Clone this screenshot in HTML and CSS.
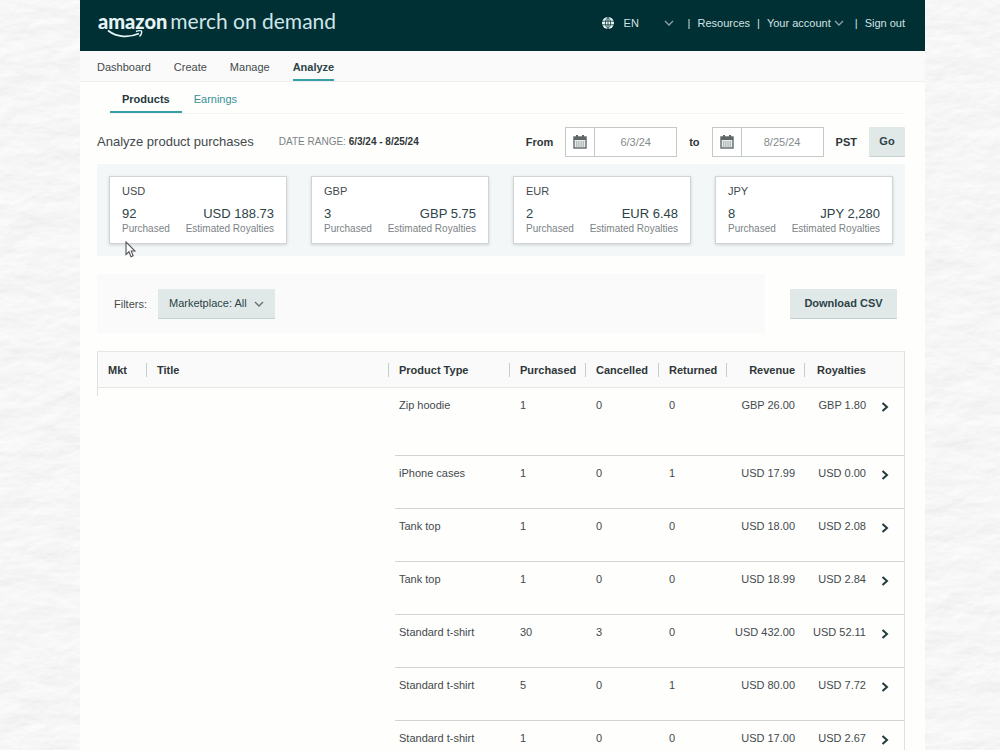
FILE: index.html
```
<!DOCTYPE html>
<html lang="en">
<head>
  <meta charset="UTF-8">
  <title>Merch on Demand - Analyze</title>
  <link rel="stylesheet" href="styles.css">
</head>
<body>
  <!-- Paper backdrop -->
  <svg class="paper" width="100%" height="100%" aria-hidden="true">
    <filter id="paper" x="0" y="0" width="100%" height="100%" color-interpolation-filters="sRGB">
      <feTurbulence type="fractalNoise" baseFrequency="0.025 0.045" numOctaves="4" seed="8" result="noise"/>
      <feDiffuseLighting in="noise" lighting-color="#fff" surfaceScale="0.6" diffuseConstant="1.02">
        <feDistantLight azimuth="250" elevation="71"/>
      </feDiffuseLighting>
    </filter>
    <rect width="100%" height="100%" filter="url(#paper)"/>
  </svg>

  <div class="page">
    <header class="topbar">
      <a class="logo" href="#">
        <span class="logo-amazon">amazon
          <svg class="smile" viewBox="0 0 36 9" fill="none" stroke="#e6f4f6" aria-hidden="true">
            <path d="M1 1.500C10 8.500 22 9 32 4.500" stroke-width="1.800"/>
            <path d="M29 2.500C31 1.500 34 1.300 34.500 2C35 3.500 34 6 32.500 7.500" stroke-width="1.400"/>
          </svg>
        </span>
        <span class="logo-merch">merch on demand</span>
      </a>
      <div class="account">
        <svg class="globe" viewBox="0 0 12 12" aria-hidden="true">
          <circle cx="6" cy="6" r="6" fill="#eef8f8"/>
          <path d="M0 4.200H12M0 7.800H12M6 0V12M6 0.500C2.500 3 2.500 9 6 11.500M6 0.500C9.500 3 9.500 9 6 11.500" fill="none" stroke="#002f34" stroke-width="0.800"/>
        </svg>
        <select class="lang" aria-label="Language"><option>EN</option></select>
        <svg class="chev" viewBox="0 0 10 6" aria-hidden="true"><path d="M1 1L5 5L9 1"/></svg>
        <span class="bar">|</span>
        <a href="#">Resources</a>
        <span class="bar">|</span>
        <a href="#">Your account <svg class="chev" viewBox="0 0 10 6" aria-hidden="true"><path d="M1 1L5 5L9 1"/></svg></a>
        <span class="bar last">|</span>
        <a href="#">Sign out</a>
      </div>
    </header>

    <nav class="main-nav">
      <a href="#">Dashboard</a>
      <a href="#">Create</a>
      <a href="#">Manage</a>
      <a href="#" class="active">Analyze</a>
    </nav>

    <main>
      <nav class="sub-nav">
        <a href="#" class="active">Products</a>
        <a href="#">Earnings</a>
      </nav>

      <div class="heading">
        <h1>Analyze product purchases</h1>
        <p class="range">DATE RANGE: <strong>6/3/24 - 8/25/24</strong></p>
        <form class="dates">
          <label for="from">From</label>
          <div class="date">
            <svg viewBox="0 0 14 14" aria-hidden="true">
              <path d="M1 2H13V13H1Z" fill="#e9ecec" stroke="#6b7274" stroke-width="1.500"/>
              <path d="M1 2H13V5H1ZM3 0H5V3H3ZM9 0H11V3H9Z" fill="#5f6668"/>
              <path d="M3 7H11M3 9H11M3 11H11" stroke="#7c8385" stroke-dasharray="1.300 0.900"/>
            </svg>
            <input type="text" id="from" value="6/3/24">
          </div>
          <label for="to">to</label>
          <div class="date">
            <svg viewBox="0 0 14 14" aria-hidden="true">
              <path d="M1 2H13V13H1Z" fill="#e9ecec" stroke="#6b7274" stroke-width="1.500"/>
              <path d="M1 2H13V5H1ZM3 0H5V3H3ZM9 0H11V3H9Z" fill="#5f6668"/>
              <path d="M3 7H11M3 9H11M3 11H11" stroke="#7c8385" stroke-dasharray="1.300 0.900"/>
            </svg>
            <input type="text" id="to" value="8/25/24">
          </div>
          <span class="zone">PST</span>
          <button type="button" class="btn go">Go</button>
        </form>
      </div>

      <section class="cards">
        <div class="card">
          <h2>USD</h2>
          <div class="figures">
            <p><b>92</b>Purchased</p>
            <p class="right"><b>USD 188.73</b>Estimated Royalties</p>
          </div>
        </div>
        <div class="card">
          <h2>GBP</h2>
          <div class="figures">
            <p><b>3</b>Purchased</p>
            <p class="right"><b>GBP 5.75</b>Estimated Royalties</p>
          </div>
        </div>
        <div class="card">
          <h2>EUR</h2>
          <div class="figures">
            <p><b>2</b>Purchased</p>
            <p class="right"><b>EUR 6.48</b>Estimated Royalties</p>
          </div>
        </div>
        <div class="card">
          <h2>JPY</h2>
          <div class="figures">
            <p><b>8</b>Purchased</p>
            <p class="right"><b>JPY 2,280</b>Estimated Royalties</p>
          </div>
        </div>
        <svg class="cursor" viewBox="0 0 11 17" aria-hidden="true">
          <path d="M1 1V13.500L4 10.800L6 15.800L8.200 14.800L6.200 10H10Z" fill="#fff" stroke="#555" stroke-width="1.100"/>
        </svg>
      </section>

      <div class="tools">
        <div class="filters">
          <label for="market">Filters:</label>
          <div class="market">
            <select id="market" class="btn"><option>Marketplace: All</option></select>
            <svg class="chev" viewBox="0 0 10 6" aria-hidden="true"><path d="M1 1L5 5L9 1"/></svg>
          </div>
        </div>
        <button type="button" class="btn download">Download CSV</button>
      </div>

      <table>
        <colgroup>
          <col class="c-mkt"><col class="c-title"><col class="c-type"><col class="c-purchased"><col class="c-cancelled"><col class="c-returned"><col class="c-revenue"><col class="c-royalties"><col class="c-more">
        </colgroup>
        <thead>
          <tr>
            <th>Mkt</th>
            <th class="title">Title</th>
            <th class="type">Product Type</th>
            <th>Purchased</th>
            <th>Cancelled</th>
            <th>Returned</th>
            <th class="num">Revenue</th>
            <th class="num">Royalties</th>
            <th></th>
          </tr>
        </thead>
        <tbody>
          <tr>
            <td colspan="2"></td><td class="type">Zip hoodie</td><td>1</td><td>0</td><td>0</td><td class="num">GBP 26.00</td><td class="num">GBP 1.80</td>
            <td class="more"><svg viewBox="0 0 8 10"><path d="M1.500 1L6 5L1.500 9"/></svg></td>
          </tr>
          <tr>
            <td colspan="2"></td><td class="type">iPhone cases</td><td>1</td><td>0</td><td>1</td><td class="num">USD 17.99</td><td class="num">USD 0.00</td>
            <td class="more"><svg viewBox="0 0 8 10"><path d="M1.500 1L6 5L1.500 9"/></svg></td>
          </tr>
          <tr>
            <td colspan="2"></td><td class="type">Tank top</td><td>1</td><td>0</td><td>0</td><td class="num">USD 18.00</td><td class="num">USD 2.08</td>
            <td class="more"><svg viewBox="0 0 8 10"><path d="M1.500 1L6 5L1.500 9"/></svg></td>
          </tr>
          <tr>
            <td colspan="2"></td><td class="type">Tank top</td><td>1</td><td>0</td><td>0</td><td class="num">USD 18.99</td><td class="num">USD 2.84</td>
            <td class="more"><svg viewBox="0 0 8 10"><path d="M1.500 1L6 5L1.500 9"/></svg></td>
          </tr>
          <tr>
            <td colspan="2"></td><td class="type">Standard t-shirt</td><td>30</td><td>3</td><td>0</td><td class="num">USD 432.00</td><td class="num">USD 52.11</td>
            <td class="more"><svg viewBox="0 0 8 10"><path d="M1.500 1L6 5L1.500 9"/></svg></td>
          </tr>
          <tr>
            <td colspan="2"></td><td class="type">Standard t-shirt</td><td>5</td><td>0</td><td>1</td><td class="num">USD 80.00</td><td class="num">USD 7.72</td>
            <td class="more"><svg viewBox="0 0 8 10"><path d="M1.500 1L6 5L1.500 9"/></svg></td>
          </tr>
          <tr>
            <td colspan="2"></td><td class="type">Standard t-shirt</td><td>1</td><td>0</td><td>0</td><td class="num">USD 17.00</td><td class="num">USD 2.67</td>
            <td class="more"><svg viewBox="0 0 8 10"><path d="M1.500 1L6 5L1.500 9"/></svg></td>
          </tr>
        </tbody>
      </table>
    </main>
  </div>
</body>
</html>
```
FILE: styles.css
```
* {
  box-sizing: border-box;
}
body {
  margin: 0;
  background: #f5f5f5;
  color: #434a4c;
  font-family: "Liberation Sans", Arial, sans-serif;
  font-size: 11px;
  line-height: 16px;
}
h1, h2, p {
  margin: 0;
  font-weight: normal;
}
a {
  color: inherit;
  text-decoration: none;
}
input, select, button {
  font: inherit;
  color: inherit;
}
select {
  appearance: none;
}
.paper {
  position: fixed;
  top: 0;
  left: 0;
  z-index: -1;
}
.page {
  margin: 0 75px 0 80px;
  min-height: 100vh;
  background: #fefefd;
}

/* Top bar */
.topbar {
  display: flex;
  align-items: center;
  justify-content: space-between;
  height: 51px;
  padding: 0 20px 6px 18px;
  background: #002f34;
  color: #d3e2e4;
}
.logo {
  display: flex;
  align-items: baseline;
  gap: 3px;
  padding-bottom: 4px;
  color: #e6f4f6;
  font-family: Lato, sans-serif;
  font-size: 21px;
  line-height: 24px;
}
.logo-amazon {
  position: relative;
  font-size: 20px;
  font-weight: 900;
}
.logo-merch {
  color: #cfe6e9;
}
.smile {
  position: absolute;
  left: 9px;
  bottom: -5px;
  width: 36px;
  height: 9px;
}
.account {
  display: flex;
  align-items: center;
}
.globe {
  width: 12px;
  height: 12px;
  margin-right: 10px;
}
.lang {
  width: 40px;
  padding: 0;
  border: 0;
  background: none;
}
.chev {
  width: 10px;
  height: 6px;
  fill: none;
  stroke: #8fa3a6;
  stroke-width: 1.3;
}
.account a .chev {
  vertical-align: 1px;
}
.bar {
  margin: 0 7px;
}
.account .chev + .bar {
  margin-left: 14px;
}
.bar.last {
  margin-left: 11px;
}

/* Navigation */
.main-nav {
  display: flex;
  gap: 23px;
  height: 31px;
  padding: 0 17px;
  background: #fafafa;
  border-bottom: 1px solid #eeeeec;
  line-height: 32px;
}
.main-nav .active {
  border-bottom: 2px solid #35a0a8;
  color: #2c4347;
  font-weight: bold;
}
main {
  padding: 0 20px 0 17px;
}
.sub-nav {
  display: flex;
  height: 32px;
  margin-left: 13px;
  border-bottom: 1px solid #f1f3f3;
  line-height: 34px;
}
.sub-nav a {
  padding: 0 12px;
  color: #3b8f96;
}
.sub-nav .active {
  border-bottom: 2px solid #35a0a8;
  color: #25393d;
  font-weight: bold;
}

/* Heading and date form */
.heading {
  display: flex;
  align-items: center;
  height: 50px;
  padding-top: 5px;
}
h1 {
  font-size: 13px;
}
.range {
  margin-left: 25px;
  color: #7c8385;
  font-size: 10px;
}
.range strong {
  color: #2f3638;
}
.dates {
  display: flex;
  align-items: center;
  gap: 12px;
  margin-left: auto;
  color: #2f3638;
  font-weight: bold;
}
.date {
  display: flex;
  align-items: center;
  height: 30px;
  border: 1px solid #c3c8c9;
  background: #fff;
}
.date svg {
  width: 14px;
  height: 14px;
  margin: 0 7px;
}
.date input {
  width: 82px;
  height: 28px;
  padding: 0;
  border: 0;
  border-left: 1px solid #c3c8c9;
  color: #858b8d;
  font-weight: normal;
  text-align: center;
}
.btn {
  height: 30px;
  border: 0;
  border-bottom: 1px solid #c5cfd0;
  border-radius: 1px;
  background: #e1e9e8;
  color: #2c4347;
}
.go {
  width: 36px;
  padding: 0;
  font-weight: bold;
}

/* Currency cards */
.cards {
  position: relative;
  display: grid;
  grid-template-columns: repeat(4, 1fr);
  gap: 24px;
  padding: 12px;
  background: #f3f7f7;
}
.card {
  padding: 7px 12px 8px;
  border: 1px solid #cfd5d6;
  background: #fff;
  box-shadow: 0 1px 3px rgba(0, 0, 0, 0.15);
}
.card h2 {
  font-size: 11px;
  line-height: 14px;
}
.figures {
  display: flex;
  justify-content: space-between;
  margin-top: 8px;
  color: #7c8385;
  font-size: 10px;
  line-height: 13px;
}
.figures b {
  display: block;
  color: #2c4347;
  font-size: 13px;
  font-weight: normal;
  line-height: 16px;
}
.right {
  text-align: right;
}
.cursor {
  position: absolute;
  left: 28px;
  bottom: -2px;
  width: 11px;
  height: 17px;
}

/* Filters */
.tools {
  display: flex;
  align-items: center;
  gap: 25px;
  margin: 18px 8px 18px 0;
}
.filters {
  display: flex;
  flex: 1;
  align-items: center;
  gap: 11px;
  height: 59px;
  padding: 0 17px;
  background: #fafafa;
}
.market {
  position: relative;
}
.market select {
  width: 117px;
  padding: 0 11px;
}
.market .chev {
  position: absolute;
  right: 11px;
  top: 12px;
  stroke: #5f6f72;
}
.download {
  width: 107px;
  padding: 0;
  font-weight: bold;
}

/* Purchases table */
table {
  width: 100%;
  table-layout: fixed;
  border-spacing: 0;
  border-right: 1px solid #dfe1e1;
}
.c-mkt { width: 50px; }
.c-type { width: 115px; }
.c-purchased { width: 76px; }
.c-cancelled { width: 73px; }
.c-returned { width: 68px; }
.c-revenue { width: 78px; }
.c-royalties { width: 71px; }
.c-more { width: 28px; }
th {
  height: 37px;
  padding: 0 0 0 10px;
  border: solid #e6e7e7;
  border-width: 1px 0;
  background: linear-gradient(#c9cccc, #c9cccc) right center / 1px 14px no-repeat #fafafa;
  color: #2f3638;
  text-align: left;
}
th:first-child {
  border-left: 1px solid #dfe1e1;
}
th.title {
  background-position: right 6px center;
}
th:nth-last-child(-n+2) {
  background-image: none;
}
td {
  height: 53px;
  padding: 9px 0 0 10px;
  border-bottom: 1px solid #d2d4d4;
  vertical-align: top;
}
td:first-child {
  border-bottom: 0;
}
tbody tr:first-child td {
  height: 68px;
}
tbody tr:first-child td:first-child {
  background: linear-gradient(#dfe1e1, #dfe1e1) left top / 1px 8px no-repeat;
}
.type {
  padding-left: 4px;
}
.num {
  padding-left: 0;
  padding-right: 10px;
  text-align: right;
}
.more {
  padding: 14px 0 0 5px;
  line-height: 10px;
}
.more svg {
  width: 8px;
  height: 10px;
  fill: none;
  stroke: #233a3e;
  stroke-width: 2;
}
```
